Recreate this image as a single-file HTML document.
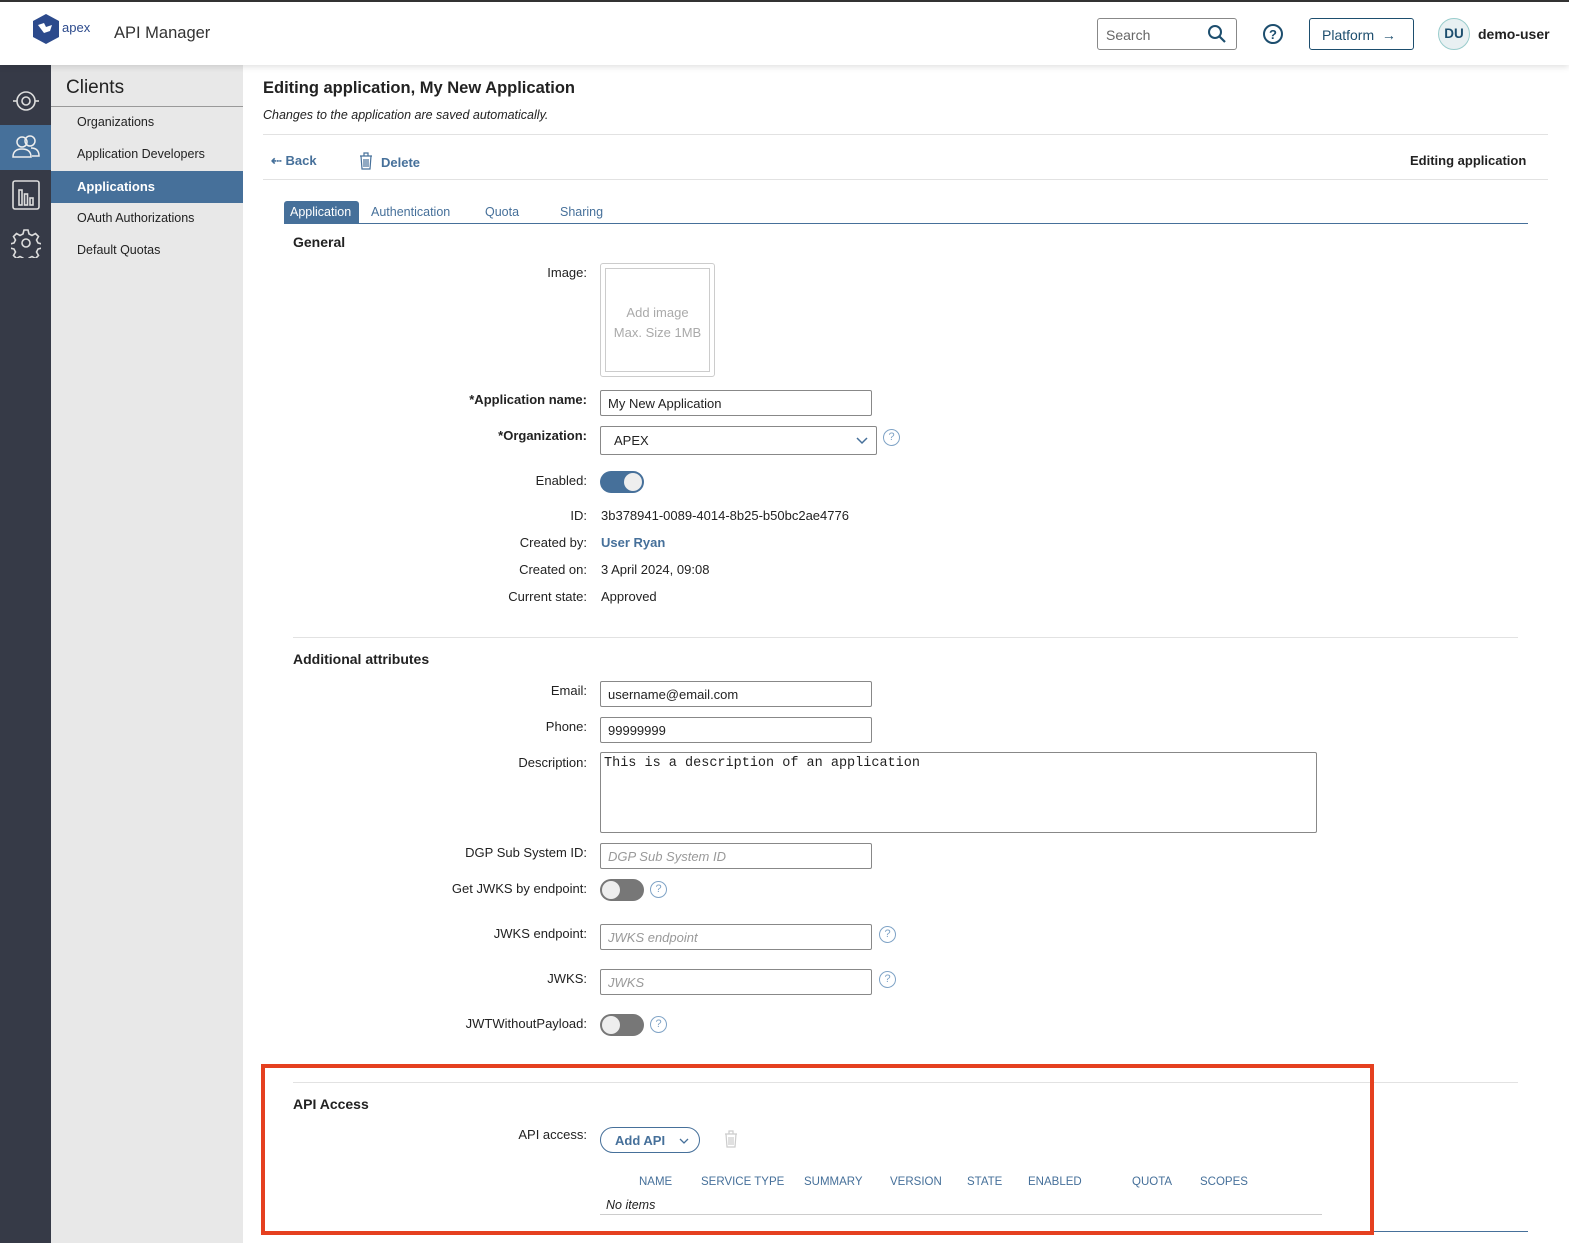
<!DOCTYPE html>
<html><head><meta charset="utf-8"><style>
*{box-sizing:border-box;margin:0;padding:0}
body{width:1569px;height:1243px;position:relative;overflow:hidden;background:#fff;font-family:"Liberation Sans",sans-serif;font-size:13px;color:#222}
.a{position:absolute}
.top{left:0;top:0;width:1569px;height:65px;background:#fff;border-top:2px solid #333;box-shadow:0 2px 6px rgba(0,0,0,.12);z-index:2}
.rail{left:0;top:65px;width:51px;height:1178px;background:#363a47}
.nav{left:51px;top:65px;width:192px;height:1178px;background:#e8e8e8}
.nav .it{position:absolute;left:26px;font-size:12.5px;color:#222}
.lbl{position:absolute;right:982px;text-align:right;font-size:13px;color:#222;white-space:nowrap}
.inp{position:absolute;left:600px;width:272px;height:26px;border:1px solid #888;border-radius:2px;padding:5px 7px;font-size:13px;color:#222;background:#fff}
.ph{color:#999;font-style:italic}
.q{position:absolute;width:17px;height:17px;border:1px solid #7fa3c6;border-radius:50%;color:#7fa3c6;font-size:11px;text-align:center;line-height:15px}
.tg{position:absolute;left:600px;width:44px;height:22px;border-radius:11px;background:#777}
.tg::after{content:"";position:absolute;left:2px;top:2px;width:18px;height:18px;border-radius:50%;background:#eee}
.tg.on{background:#46709a}.tg.on::after{left:24px}
.hr{position:absolute;height:1px;background:#e2e2e2}
.h{position:absolute;font-weight:bold;font-size:14px;color:#222}
.th{position:absolute;top:1176px;font-size:11.5px;color:#46709a}
</style></head><body>
<div class="a top">
 <svg class="a" style="left:30px;top:11px" width="32" height="32" viewBox="0 0 32 32"><polygon points="16,1 29,8 29,24 16,31 3,24 3,8" fill="#2c4a8c"/><path d="M8 12 L14 10 L16 14 L22 12 L20 18 L14 20 Z" fill="#fff"/></svg>
 <div class="a" style="left:62px;top:18px;font-size:13px;color:#2c4a8c">apex</div>
 <div class="a" style="left:114px;top:22px;font-size:16.5px;color:#333">API Manager</div>
 <div class="a" style="left:1097px;top:16px;width:140px;height:32px;border:1px solid #888;border-radius:3px;padding:8px 8px;font-size:14px;color:#666">Search</div>
 <svg class="a" style="left:1207px;top:22px" width="20" height="20" viewBox="0 0 20 20"><circle cx="8" cy="8" r="6" fill="none" stroke="#1d4e6e" stroke-width="2"/><line x1="12.5" y1="12.5" x2="18" y2="18" stroke="#1d4e6e" stroke-width="2.2"/></svg>
 <div class="a" style="left:1263px;top:22px;width:20px;height:20px;border:2px solid #1d4e6e;border-radius:50%;text-align:center;font-weight:bold;font-size:13px;line-height:17px;color:#1d4e6e">?</div>
 <div class="a" style="left:1309px;top:16px;width:105px;height:32px;border:1px solid #1d4e6e;border-radius:3px;padding:8px 12px;font-size:14px;color:#1d4e6e">Platform &nbsp;→</div>
 <div class="a" style="left:1438px;top:16px;width:32px;height:32px;border:1px solid #9cc;border-radius:50%;background:#e8f0f2;text-align:center;line-height:30px;font-weight:bold;font-size:13.5px;color:#1d4e6e">DU</div>
 <div class="a" style="left:1478px;top:24px;font-weight:bold;font-size:14px;color:#222">demo-user</div>
</div>
<div class="a rail">
 <svg class="a" style="left:12px;top:22px" width="28" height="28" viewBox="0 0 28 28" fill="none" stroke="#ddd" stroke-width="1.6"><circle cx="14" cy="14" r="9"/><circle cx="14" cy="14" r="4"/><line x1="1" y1="14" x2="5" y2="14"/><line x1="23" y1="14" x2="27" y2="14"/></svg>
 <div class="a" style="left:0;top:60px;width:51px;height:45px;background:#46709a"></div>
 <svg class="a" style="left:11px;top:68px" width="30" height="28" viewBox="0 0 30 28" fill="none" stroke="#eee" stroke-width="1.5"><circle cx="11" cy="9" r="5"/><path d="M2 24 Q2 16 11 16 Q20 16 20 24 Z"/><circle cx="19" cy="8" r="5"/><path d="M20 15 Q28 15 28 23 L21 23"/></svg>
 <svg class="a" style="left:12px;top:115px" width="28" height="30" viewBox="0 0 28 30" fill="none" stroke="#ddd" stroke-width="1.6"><rect x="1" y="1" width="26" height="28" rx="2"/><rect x="7" y="10" width="3" height="15"/><rect x="12.5" y="14" width="3" height="11"/><rect x="18" y="18" width="3" height="7"/></svg>
 <svg class="a" style="left:11px;top:163px" width="30" height="30" viewBox="0 0 30 30" fill="none" stroke="#ddd" stroke-width="1.6"><path d="M13 2h4l1 4 3 1.5 3.5-2 3 3-2 3.5 1.5 3 4 1v4l-4 1-1.5 3 2 3.5-3 3-3.5-2-3 1.5-1 4h-4l-1-4-3-1.5-3.5 2-3-3 2-3.5-1.5-3-4-1v-4l4-1 1.5-3-2-3.5 3-3 3.5 2 3-1.5z"/><circle cx="15" cy="15" r="4"/></svg>
</div>
<div class="a nav">
 <div class="a" style="left:15px;top:12px;font-size:19px;color:#222">Clients</div>
 <div class="a" style="left:0;top:41px;width:192px;height:1px;background:#999"></div>
 <div class="it" style="top:50px">Organizations</div>
 <div class="it" style="top:82px">Application Developers</div>
 <div class="a" style="left:0;top:106px;width:192px;height:32px;background:#46709a"></div>
 <div class="it" style="top:114px;color:#fff;font-weight:bold;font-size:13px">Applications</div>
 <div class="it" style="top:146px">OAuth Authorizations</div>
 <div class="it" style="top:178px">Default Quotas</div>
</div>
<div class="a" style="left:263px;top:79px;font-size:16.5px;font-weight:bold">Editing application, My New Application</div>
<div class="a" style="left:263px;top:108px;font-size:12.5px;font-style:italic">Changes to the application are saved automatically.</div>
<div class="hr" style="left:263px;top:134px;width:1285px"></div>
<div class="a" style="left:271px;top:153px;font-weight:bold;color:#46709a">⇠ Back</div>
<svg class="a" style="left:359px;top:152px" width="14" height="18" viewBox="0 0 14 18" fill="none" stroke="#46709a" stroke-width="1.2"><path d="M1 4h12M5 4V1h4v3M2 4l1 13h8l1-13M5 7v8M7 7v8M9 7v8"/></svg>
<div class="a" style="left:381px;top:155px;font-weight:bold;color:#46709a">Delete</div>
<div class="a" style="left:1410px;top:153px;font-weight:bold;font-size:13px">Editing application</div>
<div class="hr" style="left:263px;top:179px;width:1285px"></div>
<div class="a" style="left:284px;top:201px;width:75px;height:23px;background:#46709a;color:#fff;font-size:12.5px;padding:4px 6px;border-radius:3px 3px 0 0">Application</div>
<div class="a" style="left:371px;top:205px;font-size:12.5px;color:#46709a">Authentication</div>
<div class="a" style="left:485px;top:205px;font-size:12.5px;color:#46709a">Quota</div>
<div class="a" style="left:560px;top:205px;font-size:12.5px;color:#46709a">Sharing</div>
<div class="a" style="left:284px;top:223px;width:1244px;height:1px;background:#46709a"></div>
<div class="h" style="left:293px;top:234px">General</div>
<div class="lbl" style="top:265px">Image:</div>
<div class="a" style="left:600px;top:263px;width:115px;height:114px;border:1px solid #ccc;border-radius:3px;padding:4px"><div style="border:1px solid #ccc;height:104px;text-align:center;color:#aaa;font-size:13px;padding-top:34px;line-height:20px">Add image<br>Max. Size 1MB</div></div>
<div class="lbl" style="top:392px;font-weight:bold">*Application name:</div>
<div class="inp" style="top:390px">My New Application</div>
<div class="lbl" style="top:428px;font-weight:bold">*Organization:</div>
<div class="inp" style="top:426px;width:277px;height:29px;padding:6px 13px">APEX<svg style="position:absolute;right:8px;top:10px" width="12" height="8" viewBox="0 0 12 8"><path d="M1 1l5 5 5-5" fill="none" stroke="#46709a" stroke-width="1.5"/></svg></div>
<div class="q" style="left:883px;top:429px">?</div>
<div class="lbl" style="top:473px">Enabled:</div>
<div class="tg on" style="top:471px"></div>
<div class="lbl" style="top:508px">ID:</div><div class="a" style="left:601px;top:508px">3b378941-0089-4014-8b25-b50bc2ae4776</div>
<div class="lbl" style="top:535px">Created by:</div><div class="a" style="left:601px;top:535px;font-weight:bold;color:#46709a">User Ryan</div>
<div class="lbl" style="top:562px">Created on:</div><div class="a" style="left:601px;top:562px">3 April 2024, 09:08</div>
<div class="lbl" style="top:589px">Current state:</div><div class="a" style="left:601px;top:589px">Approved</div>
<div class="hr" style="left:293px;top:637px;width:1225px"></div>
<div class="h" style="left:293px;top:651px">Additional attributes</div>
<div class="lbl" style="top:683px">Email:</div><div class="inp" style="top:681px">username@email.com</div>
<div class="lbl" style="top:719px">Phone:</div><div class="inp" style="top:717px">99999999</div>
<div class="lbl" style="top:755px">Description:</div>
<div class="inp" style="top:752px;width:717px;height:81px;padding:3px 3px;font-family:'Liberation Mono',monospace;font-size:13.5px">This is a description of an application</div>
<div class="lbl" style="top:845px">DGP Sub System ID:</div><div class="inp ph" style="top:843px">DGP Sub System ID</div>
<div class="lbl" style="top:881px">Get JWKS by endpoint:</div><div class="tg" style="top:879px"></div><div class="q" style="left:650px;top:881px">?</div>
<div class="lbl" style="top:926px">JWKS endpoint:</div><div class="inp ph" style="top:924px">JWKS endpoint</div><div class="q" style="left:879px;top:926px">?</div>
<div class="lbl" style="top:971px">JWKS:</div><div class="inp ph" style="top:969px">JWKS</div><div class="q" style="left:879px;top:971px">?</div>
<div class="lbl" style="top:1016px">JWTWithoutPayload:</div><div class="tg" style="top:1014px"></div><div class="q" style="left:650px;top:1016px">?</div>
<div class="hr" style="left:293px;top:1082px;width:1225px"></div>
<div class="h" style="left:293px;top:1096px">API Access</div>
<div class="lbl" style="top:1127px">API access:</div>
<div class="a" style="left:600px;top:1127px;width:100px;height:26px;border:1px solid #46709a;border-radius:13px;padding:5px 14px;font-weight:bold;color:#46709a;white-space:nowrap">Add API<svg style="position:absolute;left:78px;top:10px" width="10" height="7" viewBox="0 0 10 7"><path d="M1 1l4 4 4-4" fill="none" stroke="#46709a" stroke-width="1.3"/></svg></div>
<svg class="a" style="left:724px;top:1130px" width="14" height="18" viewBox="0 0 14 18" fill="none" stroke="#ccc" stroke-width="1.2"><path d="M1 4h12M5 4V1h4v3M2 4l1 13h8l1-13M5 7v8M7 7v8M9 7v8"/></svg>
<div class="th" style="left:639px">NAME</div><div class="th" style="left:701px">SERVICE TYPE</div><div class="th" style="left:804px">SUMMARY</div><div class="th" style="left:890px">VERSION</div><div class="th" style="left:967px">STATE</div><div class="th" style="left:1028px">ENABLED</div><div class="th" style="left:1132px">QUOTA</div><div class="th" style="left:1200px">SCOPES</div>
<div class="a" style="left:606px;top:1198px;font-style:italic;font-size:12.5px">No items</div>
<div class="a" style="left:600px;top:1214px;width:722px;height:1px;background:#ccc"></div>
<div class="a" style="left:1373px;top:1231px;width:155px;height:1px;background:#46709a"></div>
<div class="a" style="left:261px;top:1064px;width:1113px;height:171px;border:4px solid #e5401f"></div>
</body></html>
